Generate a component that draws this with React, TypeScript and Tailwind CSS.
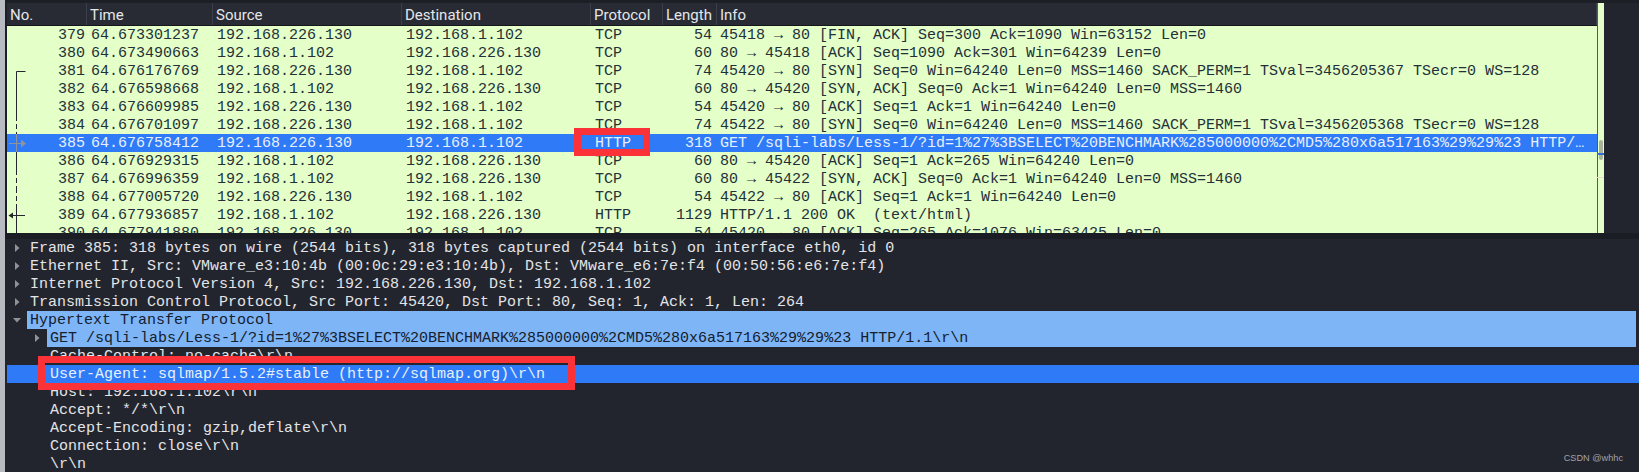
const rows = [
  ["379", "64.673301237", "192.168.226.130", "192.168.1.102", "TCP", "54", "45418 → 80 [FIN, ACK] Seq=300 Ack=1090 Win=63152 Len=0"],
  ["380", "64.673490663", "192.168.1.102", "192.168.226.130", "TCP", "60", "80 → 45418 [ACK] Seq=1090 Ack=301 Win=64239 Len=0"],
  ["381", "64.676176769", "192.168.226.130", "192.168.1.102", "TCP", "74", "45420 → 80 [SYN] Seq=0 Win=64240 Len=0 MSS=1460 SACK_PERM=1 TSval=3456205367 TSecr=0 WS=128"],
  ["382", "64.676598668", "192.168.1.102", "192.168.226.130", "TCP", "60", "80 → 45420 [SYN, ACK] Seq=0 Ack=1 Win=64240 Len=0 MSS=1460"],
  ["383", "64.676609985", "192.168.226.130", "192.168.1.102", "TCP", "54", "45420 → 80 [ACK] Seq=1 Ack=1 Win=64240 Len=0"],
  ["384", "64.676701097", "192.168.226.130", "192.168.1.102", "TCP", "74", "45422 → 80 [SYN] Seq=0 Win=64240 Len=0 MSS=1460 SACK_PERM=1 TSval=3456205368 TSecr=0 WS=128"],
  ["385", "64.676758412", "192.168.226.130", "192.168.1.102", "HTTP", "318", "GET /sqli-labs/Less-1/?id=1%27%3BSELECT%20BENCHMARK%285000000%2CMD5%280x6a517163%29%29%23 HTTP/…"],
  ["386", "64.676929315", "192.168.1.102", "192.168.226.130", "TCP", "60", "80 → 45420 [ACK] Seq=1 Ack=265 Win=64240 Len=0"],
  ["387", "64.676996359", "192.168.1.102", "192.168.226.130", "TCP", "60", "80 → 45422 [SYN, ACK] Seq=0 Ack=1 Win=64240 Len=0 MSS=1460"],
  ["388", "64.677005720", "192.168.226.130", "192.168.1.102", "TCP", "54", "45422 → 80 [ACK] Seq=1 Ack=1 Win=64240 Len=0"],
  ["389", "64.677936857", "192.168.1.102", "192.168.226.130", "HTTP", "1129", "HTTP/1.1 200 OK  (text/html)"],
  ["390", "64.677941880", "192.168.226.130", "192.168.1.102", "TCP", "54", "45420 → 80 [ACK] Seq=265 Ack=1076 Win=63425 Len=0"],
];

const headers = [
  ["No.", "w-[80px]"],
  ["Time", "w-[126px]"],
  ["Source", "w-[189px]"],
  ["Destination", "w-[189px]"],
  ["Protocol", "w-[72px]"],
  ["Length", "w-[54px]"],
  ["Info", "flex-1"],
];

function Graph({ n }: { n: string }) {
  const ink = "#23262f";
  const x = 9.5;
  return (
    <svg width="24" height="18" className="shrink-0" viewBox="0 0 24 18">
      {n === "381" && <path d={`M${x} 18V9.5h9`} stroke={ink} fill="none" />}
      {(n === "382" || n === "383" || n === "386" || n === "390") && <path d={`M${x} 0V18`} stroke={ink} />}
      {(n === "384" || n === "387" || n === "388") && <path d={`M${x} 0V18`} stroke={ink} strokeDasharray="5 3" />}
      {n === "385" && (
        <>
          <path d={`M${x} 0V18`} stroke="#8f949c" />
          <path d="M2 9.5H15" stroke="#8f949c" />
          <path d="M14 5.5L19 9.5L14 13.5Z" fill="#8f949c" />
        </>
      )}
      {n === "389" && (
        <>
          <path d={`M${x} 0V18`} stroke={ink} />
          <path d="M5 9.5H18" stroke={ink} />
          <path d="M1.5 9.5L6 6.5V12.5Z" fill={ink} />
        </>
      )}
    </svg>
  );
}

function Row({ r }: { r: string[] }) {
  const sel = r[0] === "385";
  return (
    <div className={`flex h-[18px] shrink-0 items-start whitespace-pre leading-[20px] ${sel ? "bg-[#2f7bf7] text-[#e8f0fb]" : "text-[#23303a]"}`}>
      <div className="flex w-[80px] shrink-0 justify-between">
        <Graph n={r[0]} />
        <span className="pr-[2px] text-right">{r[0]}</span>
      </div>
      <span className="w-[126px] shrink-0 pl-[4px]">{r[1]}</span>
      <span className="w-[189px] shrink-0 pl-[4px]">{r[2]}</span>
      <span className="w-[189px] shrink-0 pl-[4px]">{r[3]}</span>
      <span className="w-[68px] shrink-0 pl-[4px]">{r[4]}</span>
      <span className="w-[55px] shrink-0 pr-[2px] text-right">{r[5]}</span>
      <span className="min-w-0 flex-1 overflow-hidden pl-[6px]">{r[6]}</span>
    </div>
  );
}

function Tri({ open }: { open?: boolean }) {
  return (
    <svg width="10" height="10" viewBox="0 0 10 10" className="shrink-0">
      {open ? <path d="M1 3H9L5 7.5Z" fill="#8f9298" /> : <path d="M3 1L7.5 5L3 9Z" fill="#8f9298" />}
    </svg>
  );
}

function Detail({ text, indent, tri, open, bg, full }: { text: string; indent: number; tri?: boolean; open?: boolean; bg?: string; full?: boolean }) {
  return (
    <div className={`flex h-[18px] shrink-0 items-center whitespace-pre pr-[3px] ${full ? bg : ""}`}>
      <div className={indent === 0 ? "flex w-[20px] shrink-0 justify-end pr-[5px]" : "flex w-[40px] shrink-0 justify-end pr-[5px]"}>{tri && <Tri open={open} />}</div>
      <div className={`h-[18px] flex-1 pl-[3px] leading-[20px] ${bg ?? ""}`}>{text}</div>
    </div>
  );
}

export default function App() {
  return (
    <div
      className="relative flex h-[472px] w-[1639px] flex-col overflow-hidden border-l-[5px] border-[#b9bbc2] bg-[#23252e] text-[15px]"
      style={{ fontFamily: '"Liberation Mono", monospace' }}
    >
      <div className="h-[3px] shrink-0 bg-[#1d1f26]" />
      <div className="flex h-[230px] shrink-0 border-l-[2px] border-[#1d1f26]">
        <div className="flex w-[1590px] shrink-0 flex-col overflow-hidden">
          <div className="flex h-[23px] shrink-0 border-b border-[#14161b] bg-[#282b34] font-['Roboto'] text-[15px] text-[#e4e6ea]">
            {headers.map(([h, w]) => (
              <div key={h} className={`${w} flex items-center border-r border-[#3b3f49] pt-[3px] pl-[3px]`}>
                {h}
              </div>
            ))}
          </div>
          <div className="flex flex-1 flex-col overflow-hidden bg-[#e4ffc7]">
            {rows.map((r) => (
              <Row key={r[0]} r={r} />
            ))}
          </div>
        </div>
        <div className="flex w-[7px] shrink-0 flex-col border-l border-[#555860] bg-[#e4ffc7] pt-[137px]">
          <div className="mx-auto h-[20px] w-[4px] rounded-sm bg-[#a9b39a]" />
        </div>
      </div>
      <div className="h-[6px] shrink-0 bg-[#1b1d24]" />
      <div className="flex min-h-0 flex-1 flex-col overflow-hidden pl-[2px] text-[#e2e4e8]">
        <Detail indent={0} tri text="Frame 385: 318 bytes on wire (2544 bits), 318 bytes captured (2544 bits) on interface eth0, id 0" />
        <Detail indent={0} tri text="Ethernet II, Src: VMware_e3:10:4b (00:0c:29:e3:10:4b), Dst: VMware_e6:7e:f4 (00:50:56:e6:7e:f4)" />
        <Detail indent={0} tri text="Internet Protocol Version 4, Src: 192.168.226.130, Dst: 192.168.1.102" />
        <Detail indent={0} tri text="Transmission Control Protocol, Src Port: 45420, Dst Port: 80, Seq: 1, Ack: 1, Len: 264" />
        <Detail indent={0} tri open bg="bg-[#7eb5f7] text-[#14202e]" text="Hypertext Transfer Protocol" />
        <Detail indent={1} tri bg="bg-[#7eb5f7] text-[#14202e]" text="GET /sqli-labs/Less-1/?id=1%27%3BSELECT%20BENCHMARK%285000000%2CMD5%280x6a517163%29%29%23 HTTP/1.1\r\n" />
        <Detail indent={1} text="Cache-Control: no-cache\r\n" />
        <Detail indent={1} full bg="bg-[#2f7bf7] text-[#e8f0fb]" text="User-Agent: sqlmap/1.5.2#stable (http://sqlmap.org)\r\n" />
        <Detail indent={1} text="Host: 192.168.1.102\r\n" />
        <Detail indent={1} text="Accept: */*\r\n" />
        <Detail indent={1} text="Accept-Encoding: gzip,deflate\r\n" />
        <Detail indent={1} text="Connection: close\r\n" />
        <Detail indent={1} text="\r\n" />
      </div>
      <div className="absolute top-[128px] left-[569px] h-[28px] w-[76px] border-[7px] border-[#fb3238]" />
      <div className="absolute top-[356px] left-[33px] h-[34px] w-[537px] border-[7px] border-[#fb3238]" />
      <div className="absolute top-[153px] left-[1592px] h-[2px] w-[7px] bg-[#2f6fd8]" />
      <div className="absolute top-[177px] left-[1592px] h-[1px] w-[7px] bg-[#f0d8d4]" />
      <div className="absolute top-[451px] right-[16px] font-['Liberation_Sans'] text-[9.2px] leading-[14px] text-[#a0a2a8]">CSDN @whhc</div>
    </div>
  );
}
